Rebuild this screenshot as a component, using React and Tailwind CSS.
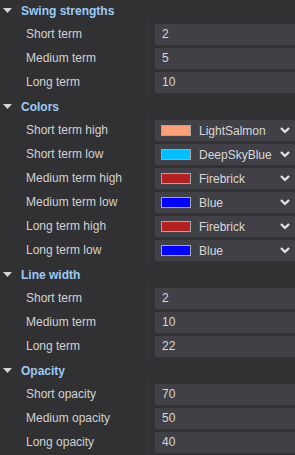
import React from 'react';

const sections = [
  {
    title: 'Swing strengths',
    rows: [
      { label: 'Short term', value: '2' },
      { label: 'Medium term', value: '5' },
      { label: 'Long term', value: '10' },
    ],
  },
  {
    title: 'Colors',
    rows: [
      { label: 'Short term high', color: '#ffa07a', name: 'LightSalmon' },
      { label: 'Short term low', color: '#00bfff', name: 'DeepSkyBlue' },
      { label: 'Medium term high', color: '#b22222', name: 'Firebrick' },
      { label: 'Medium term low', color: '#0000ff', name: 'Blue' },
      { label: 'Long term high', color: '#b22222', name: 'Firebrick' },
      { label: 'Long term low', color: '#0000ff', name: 'Blue' },
    ],
  },
  {
    title: 'Line width',
    rows: [
      { label: 'Short term', value: '2' },
      { label: 'Medium term', value: '10' },
      { label: 'Long term', value: '22' },
    ],
  },
  {
    title: 'Opacity',
    rows: [
      { label: 'Short opacity', value: '70' },
      { label: 'Medium opacity', value: '50' },
      { label: 'Long opacity', value: '40' },
    ],
  },
];

const Chevron = () => (
  <svg width="10" height="7" viewBox="0 0 10 7" className="shrink-0">
    <path d="M1 1 L5 5 L9 1" fill="none" stroke="#e4e4e4" strokeWidth="2.2" />
  </svg>
);

const Row = ({ row }) => (
  <div className="flex h-[24px]">
    <div className="w-[148px] shrink-0 pl-[26px] text-[12px] leading-[21px] text-[#d2d2d2]">
      {row.label}
    </div>
    <div className="flex-1 border-l border-[#3e3e42] pl-[6px]">
      {row.color ? (
        <div className="flex h-[21px] items-center bg-[#414046] pl-[6px] pr-[5px]">
          <div
            className="h-[11px] w-[30px] shrink-0 border border-[#a6a6a6]"
            style={{ backgroundColor: row.color }}
          />
          <span className="ml-[8px] flex-1 text-[12px] text-[#d8d8d8]">{row.name}</span>
          <Chevron />
        </div>
      ) : (
        <div className="h-[21px] bg-[#414046] pl-[7px] text-[12px] leading-[21px] text-[#d8d8d8]">
          {row.value}
        </div>
      )}
    </div>
  </div>
);

const App = () => {
  return (
    <div
      className="h-[455px] w-[295px] overflow-hidden bg-[#313133]"
      style={{ fontFamily: '"Liberation Sans", Arial, sans-serif' }}
    >
      {sections.map((s) => (
        <div key={s.title}>
          <div className="flex h-[21px] items-center">
            <svg width="9" height="5" viewBox="0 0 9 5" className="ml-[3px]">
              <path d="M0 0 H9 L4.5 5 Z" fill="#d6d6d6" />
            </svg>
            <span className="ml-[9px] text-[12px] font-bold text-[#9ccbf3]">{s.title}</span>
          </div>
          <div className="flex">
            <div className="w-[148px] shrink-0" />
            <div className="h-[3px] flex-1 border-l border-[#3e3e42]" />
          </div>
          {s.rows.map((r, i) => (
            <Row key={i} row={r} />
          ))}
        </div>
      ))}
    </div>
  );
};

export default App;
